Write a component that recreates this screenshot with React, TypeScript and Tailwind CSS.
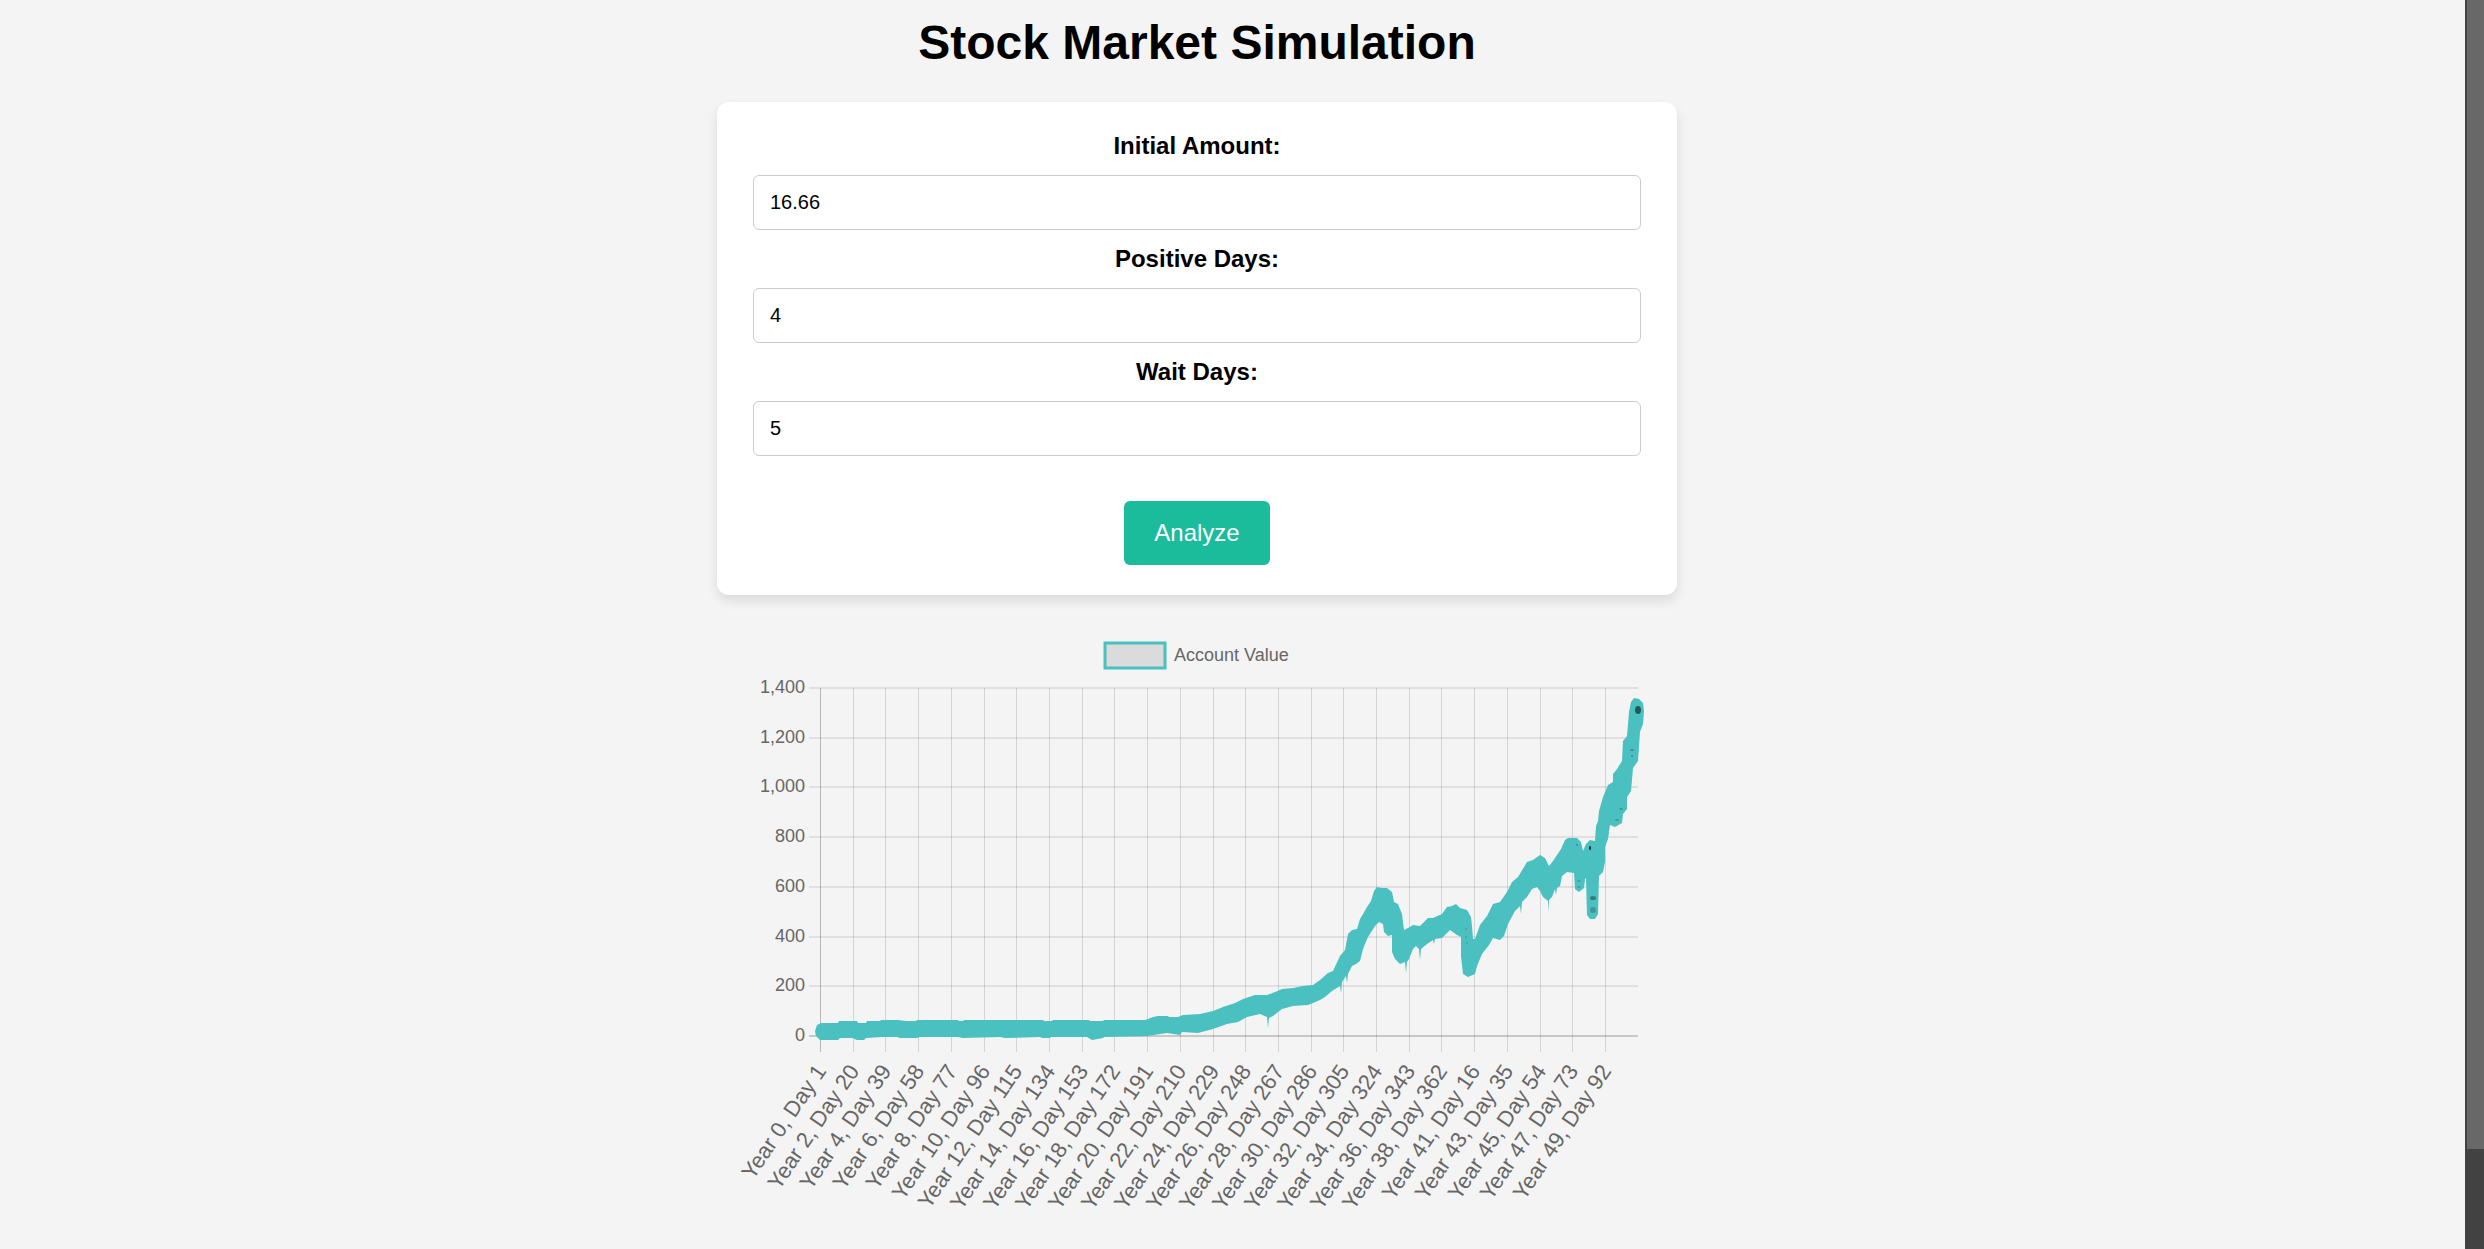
import { useState } from 'react';

// plot area inside the chart's viewBox
const PLOT = { left: 821, right: 1638, top: 689, bottom: 1037 };

const yTicks = ['0', '200', '400', '600', '800', '1,000', '1,200', '1,400'];

const xTicks = [
  'Year 0, Day 1',
  'Year 2, Day 20',
  'Year 4, Day 39',
  'Year 6, Day 58',
  'Year 8, Day 77',
  'Year 10, Day 96',
  'Year 12, Day 115',
  'Year 14, Day 134',
  'Year 16, Day 153',
  'Year 18, Day 172',
  'Year 20, Day 191',
  'Year 22, Day 210',
  'Year 24, Day 229',
  'Year 26, Day 248',
  'Year 28, Day 267',
  'Year 30, Day 286',
  'Year 32, Day 305',
  'Year 34, Day 324',
  'Year 36, Day 343',
  'Year 38, Day 362',
  'Year 41, Day 16',
  'Year 43, Day 35',
  'Year 45, Day 54',
  'Year 47, Day 73',
  'Year 49, Day 92'
];

// upper edge of the line, left to right
const upperEdge =
  '815,1032 817,1026 821,1024 838,1024 839,1022 857,1022 858,1024 866,1024 867,1022 880,1022 881,1021 898,1021 ' +
  '906,1022 916,1022 917,1021 958,1021 959,1022 963,1022 964,1021 1043,1021 1044,1022 1052,1022 1053,1021 1089,1021 ' +
  '1090,1022 1103,1022 1104,1021 1145,1021 1148,1020 1153,1018 1158,1017 1168,1017 1169,1018 1178,1018 1183,1016 ' +
  '1200,1015 1213,1012 1223,1008 1235,1004 1243,1000 1255,996 1267,996 1275,993 1282,990 1293,989 1303,987 1313,986 ' +
  '1320,981 1328,974 1333,972 1340,957 1345,951 1348,935 1352,931 1357,930 1360,920 1363,915 1367,908 1371,902 ' +
  '1374,892 1377,888 1382,889 1387,889 1392,893 1394,903 1398,905 1402,915 1404,931 1408,929 1413,926 1420,927 ' +
  '1428,919 1433,919 1442,915 1447,908 1452,907 1456,905 1460,909 1467,911 1471,918 1472,927 1473,940 1475,940 ' +
  '1480,926 1487,917 1493,905 1500,903 1507,893 1512,883 1518,878 1527,863 1533,861 1540,856 1545,859 1549,867 ' +
  '1553,862 1557,856 1561,850 1565,841 1568,839 1577,839 1581,843 1583,852 1586,845 1590,841 1595,842 1596,827 ' +
  '1598,822 1599,812 1603,798 1608,786 1613,783 1613,775 1617,770 1622,762 1623,742 1627,737 1629,713 1631,703 ' +
  '1634,699 1639,700 1643,704 1644,712';

// lower edge, right to left
const lowerEdge =
  '1643,725 1640,733 1638,762 1633,769 1631,792 1627,798 1627,810 1623,815 1622,824 1615,828 1610,826 1608,840 ' +
  '1605,848 1605,863 1603,873 1599,877 1598,915 1595,920 1590,920 1587,916 1586,879 1585,880 1584,889 1579,893 ' +
  '1575,890 1574,874 1567,873 1562,877 1560,887 1557,889 1556,896 1555,890 1552,898 1549,901 1549,913 1548,902 ' +
  '1543,898 1540,892 1537,888 1532,890 1527,898 1522,903 1521,915 1520,907 1515,912 1508,925 1504,937 1500,941 ' +
  '1493,939 1489,946 1482,955 1477,967 1475,975 1468,978 1463,975 1461,957 1461,938 1457,936 1450,931 1447,934 ' +
  '1442,939 1435,940 1434,945 1433,941 1427,945 1421,950 1420,961 1419,950 1416,947 1413,950 1409,960 1407,963 ' +
  '1406,974 1405,963 1400,965 1395,960 1392,953 1392,936 1388,937 1384,933 1383,925 1379,923 1375,927 1368,938 ' +
  '1365,945 1363,950 1360,962 1356,965 1352,967 1348,975 1347,984 1346,977 1342,983 1341,994 1340,987 1332,992 ' +
  '1325,998 1320,1001 1313,1004 1308,1006 1293,1007 1282,1010 1273,1017 1269,1019 1268,1029 1267,1018 1260,1015 ' +
  '1247,1018 1238,1023 1227,1025 1213,1030 1198,1034 1182,1033 1180,1036 1167,1034 1147,1037 1104,1038 1103,1039 ' +
  '1092,1041 1087,1038 1051,1038 1050,1039 1042,1039 1040,1038 1005,1039 1000,1038 963,1039 958,1038 920,1038 ' +
  '917,1039 900,1039 897,1038 882,1038 866,1039 864,1041 857,1041 852,1039 840,1039 838,1041 820,1041 816,1037';

const spots = [
  { x: 1638, y: 711, rx: 3, ry: 4, opacity: 0.55 },
  { x: 1590, y: 849, rx: 1, ry: 2, opacity: 0.9 },
  { x: 1593, y: 899, rx: 3, ry: 2, opacity: 0.35 },
  { x: 1593, y: 911, rx: 3, ry: 3, opacity: 0.2 },
  { x: 1577, y: 846, rx: 1, ry: 1, opacity: 0.3 },
  { x: 1579, y: 882, rx: 2, ry: 1, opacity: 0.15 },
  { x: 1579, y: 888, rx: 2, ry: 1, opacity: 0.15 },
  { x: 1617, y: 821, rx: 2, ry: 1, opacity: 0.2 },
  { x: 1621, y: 810, rx: 2, ry: 1, opacity: 0.2 },
  { x: 1632, y: 751, rx: 2, ry: 1, opacity: 0.25 },
  { x: 1632, y: 757, rx: 1, ry: 1, opacity: 0.25 },
  { x: 1466, y: 930, rx: 1, ry: 1, opacity: 0.15 },
  { x: 1466, y: 938, rx: 1, ry: 1, opacity: 0.15 },
  { x: 1467, y: 944, rx: 1, ry: 1, opacity: 0.15 }
];

function AccountChart() {
  const stepY = (PLOT.bottom - PLOT.top) / (yTicks.length - 1);
  const stepX = 785 / (xTicks.length - 1);

  return (
    <svg
      viewBox="717 625 960 600"
      className="block w-full font-['Liberation_Sans',Arial,sans-serif]"
      role="img"
      aria-label="Account Value"
    >
      {/* Legend */}
      <rect x="1105" y="644" width="60" height="25" fill="#dbdbdb" stroke="#4bc0c0" strokeWidth="3" />
      <text x="1174" y="662" fill="#666" className="text-[18px]">
        Account Value
      </text>

      {/* Grid */}
      {yTicks.map((label, i) => {
        const y = Math.round(PLOT.bottom - i * stepY);
        return (
          <g key={label}>
            <rect x="809" y={y - 1} width={PLOT.right - 809} height="2" fill="#000" fillOpacity={i === 0 ? 0.18 : 0.08} />
            <text x="805" y={y + 5} textAnchor="end" fill="#666" className="text-[18px]">
              {label}
            </text>
          </g>
        );
      })}
      {xTicks.map((label, i) => {
        const x = Math.round(PLOT.left + i * stepX);
        return (
          <g key={label}>
            <rect x={x - 1} y={PLOT.top} width="1" height="364" fill="#000" fillOpacity={i === 0 ? 0.25 : 0.13} />
            <text transform={`translate(${x + 6} 1072) rotate(-56)`} textAnchor="end" fill="#666" className="text-[22px]">
              {label}
            </text>
          </g>
        );
      })}

      {/* Account value */}
      <polygon points={`${upperEdge} ${lowerEdge}`} fill="#4bc0c0" />
      {spots.map((s, i) => (
        <ellipse key={i} cx={s.x} cy={s.y} rx={s.rx} ry={s.ry} fill="#000" fillOpacity={s.opacity} />
      ))}
    </svg>
  );
}

export default function App() {
  const [values, setValues] = useState({ amount: '16.66', positive: '4', wait: '5' });

  const fields = [
    { id: 'amount', label: 'Initial Amount:' },
    { id: 'positive', label: 'Positive Days:' },
    { id: 'wait', label: 'Wait Days:' }
  ] as const;

  return (
    <div className="flex min-h-screen bg-[#f4f4f4] font-['Liberation_Sans',Arial,sans-serif] text-black">
      <main className="flex flex-1 flex-col items-center pt-[15px] pr-[71px]">
        <h1 className="mb-8 text-5xl leading-[55px] font-bold">Stock Market Simulation</h1>

        <form
          onSubmit={e => e.preventDefault()}
          className="flex w-full max-w-[960px] flex-col items-center rounded-xl bg-white px-9 py-[30px] shadow-[0_6px_12px_rgba(0,0,0,0.1)]"
        >
          <div className="flex w-full flex-col gap-[15px]">
            {fields.map(field => (
              <div key={field.id} className="flex flex-col gap-4">
                <label htmlFor={field.id} className="text-center text-2xl leading-[27px] font-bold">
                  {field.label}
                </label>
                <input
                  id={field.id}
                  type="text"
                  value={values[field.id]}
                  onChange={e => setValues({ ...values, [field.id]: e.target.value })}
                  className="h-[55px] w-full rounded-md border border-[#ccc] bg-white px-4 text-xl"
                />
              </div>
            ))}
          </div>
          <button type="submit" className="mt-[45px] h-16 rounded-md bg-[#1abc9c] px-[30px] text-2xl text-white">
            Analyze
          </button>
        </form>

        <div className="mt-[29px] w-full max-w-[960px]">
          <AccountChart />
        </div>
      </main>

      {/* Scrollbar */}
      <div className="w-[19px] bg-[#424242] pl-0.5" aria-hidden="true">
        <div className="h-[92%] bg-[#686868]" />
      </div>
    </div>
  );
}
